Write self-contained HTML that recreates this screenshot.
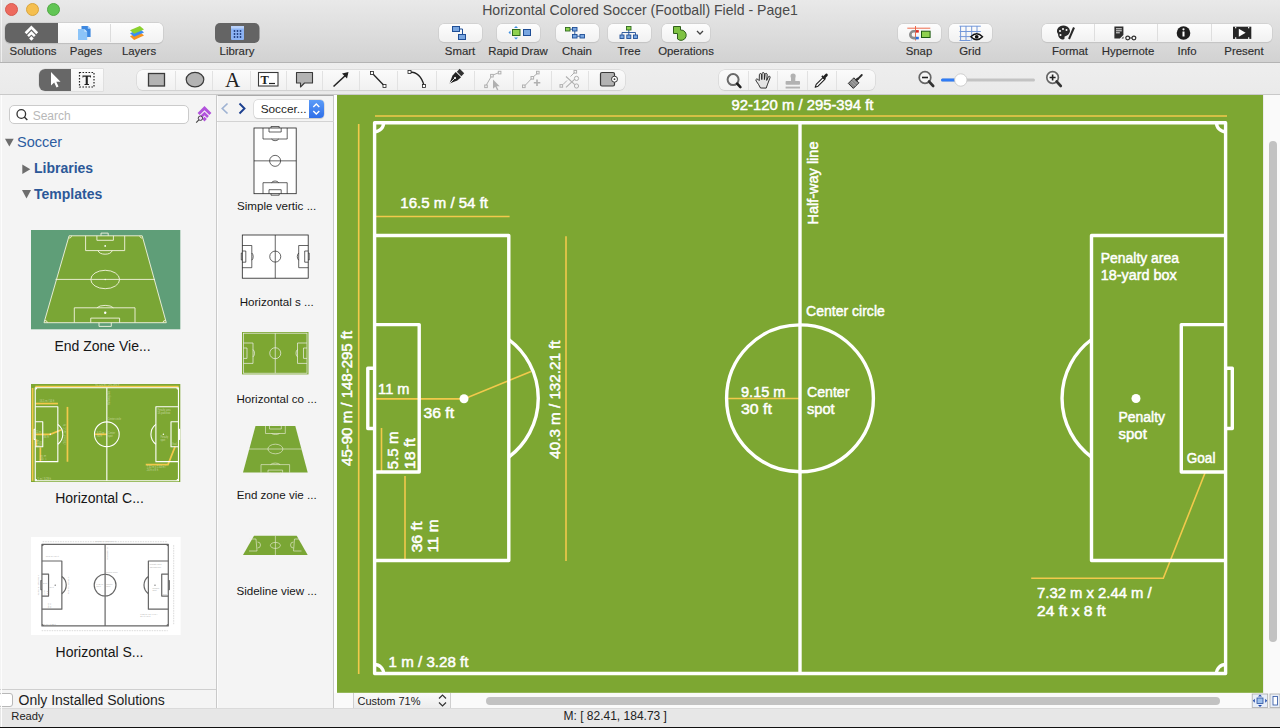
<!DOCTYPE html>
<html><head><meta charset="utf-8">
<style>
*{margin:0;padding:0;box-sizing:border-box}
html,body{width:1280px;height:728px;overflow:hidden;background:#f5f5f5}
body{position:relative;font-family:"Liberation Sans",sans-serif;color:#333}
.a{position:absolute}
#tb{left:0;top:0;width:1280px;height:63px;background:linear-gradient(#e9e9e9,#d2d2d2);border-bottom:1px solid #b4b4b4}
#title{left:0;top:1.5px;width:1280px;text-align:center;font-size:14.1px;color:#4a4a4a}
.tl{width:13px;height:13px;border-radius:50%;top:3px}
.lbl{font-size:11.4px;color:#2e2e2e;text-align:center;top:45.3px;-webkit-text-stroke:0.15px #2e2e2e}
.btn{background:linear-gradient(#fdfdfd,#f1f1f1);border-radius:5px;box-shadow:0 0 0 0.5px #c8c8c8,0 0.5px 1px rgba(0,0,0,.12);height:18.8px;top:23.5px}
#tb2{left:0;top:63px;width:1280px;height:32px;background:linear-gradient(#eeeeee,#eaeaea);border-bottom:1px solid #c9c9c9}
.grp{background:linear-gradient(#fbfbfb,#f1f1f1);border-radius:6px;box-shadow:0 0 0 0.5px #d0d0d0,0 0.5px 1px rgba(0,0,0,.1);top:69.6px;height:20.8px}
#left{left:0;top:95px;width:217px;height:613px;background:#f4f4f4;border-right:1px solid #c9c9c9}
#lib{left:217px;top:95px;width:117px;height:613px;background:#f4f4f4;border-right:1px solid #c9c9c9;border-left:1px solid #fcfcfc;border-top:1px solid #a9a9a9}
#canvas{left:334px;top:95px;width:946px;height:613px;background:#fafafa}
#fld *{vector-effect:non-scaling-stroke}
.sm{font-size:14px;color:#161616;text-align:center}
.lt{font-size:11.6px;color:#161616;text-align:center;margin-left:1.2px}
#status{left:0;top:708px;width:1280px;height:19px;background:#e7e7e7;border-top:1px solid #dadada}
</style></head><body>
<div id="tb" class="a"></div>
<div id="title" class="a">Horizontal Colored Soccer (Football) Field - Page1</div>
<div class="a tl" style="left:5.3px;background:#ed6a5e;border:0.5px solid #d65a4f"></div>
<div class="a tl" style="left:25.9px;background:#f5bf4f;border:0.5px solid #d9a53d"></div>
<div class="a tl" style="left:46.6px;background:#61c554;border:0.5px solid #52a945"></div>


<!-- toolbar top -->
<div class="a" style="left:5px;top:23px;width:158px;height:19.5px;border-radius:5px;background:linear-gradient(#fdfdfd,#f2f2f2);box-shadow:0 0 0 0.5px #c4c4c4,0 0.5px 1px rgba(0,0,0,.15);overflow:hidden">
 <div class="a" style="left:0;top:0;width:53px;height:19.5px;background:#646464"></div>
 <div class="a" style="left:105px;top:1px;width:1px;height:17.5px;background:#dcdcdc"></div>
</div>
<svg class="a" style="left:0;top:0" width="1280" height="62">
 <!-- solutions icon -->
 <g fill="none" stroke="#fff" stroke-linejoin="miter"><path d="M25.6,33.2 L31.4,27.4 L37.2,33.2" stroke-width="2.7"/><path d="M28,36.2 L31.4,32.8 L34.8,36.2" stroke-width="2.5"/></g>
 <path d="M31.4,36.1 l2.3,2.3 l-2.3,2.3 l-2.3,-2.3 z" fill="#fff"/>
 <!-- pages icon -->
 <path d="M81.5,26 h6.3 l2.8,2.8 v8.2 h-9.1 z" fill="#3d88e0"/><path d="M87.8,26 v2.8 h2.8" fill="#a9d2fb"/>
 <path d="M78,28.9 h6.4 l2.8,2.8 v8.4 h-9.2 z" fill="#8cc4f8"/><path d="M84.4,28.9 v2.8 h2.8z" fill="#c8e4fd"/>
 <!-- layers icon -->
 <path d="M130,36.3 L139.9,32 L144,35.5 L134.1,39.9 z" fill="#f6921e"/>
 <path d="M130,33.3 L139.9,29 L144,32.5 L134.1,36.8 z" fill="#3b8cf5"/>
 <path d="M130,30.3 L139.9,26 L144,29.5 L134.1,33.7 z" fill="#8bd12e"/>
 <!-- library -->
 <rect x="215" y="23" width="44.5" height="20" rx="5" fill="#646464"/>
 <rect x="231" y="26" width="13" height="14" rx="1" fill="#8db4f5"/><rect x="231" y="26" width="13" height="2.5" fill="#b9d1fa"/>
 <g fill="#1e3a7a"><circle cx="234.5" cy="31" r="0.9"/><circle cx="237.5" cy="31" r="0.9"/><circle cx="240.5" cy="31" r="0.9"/><circle cx="234.5" cy="34" r="0.9"/><circle cx="237.5" cy="34" r="0.9"/><circle cx="240.5" cy="34" r="0.9"/><circle cx="234.5" cy="37" r="0.9"/><circle cx="237.5" cy="37" r="0.9"/><circle cx="240.5" cy="37" r="0.9"/></g>
</svg>
<div class="a lbl" style="left:5px;width:56px">Solutions</div>
<div class="a lbl" style="left:58px;width:56px">Pages</div>
<div class="a lbl" style="left:111px;width:56px">Layers</div>
<div class="a lbl" style="left:209px;width:56px">Library</div>

<div class="a btn" style="left:439px;width:43px"></div>
<div class="a btn" style="left:497px;width:43px"></div>
<div class="a btn" style="left:555.5px;width:43px"></div>
<div class="a btn" style="left:607.5px;width:43px"></div>
<div class="a btn" style="left:662px;width:48px"></div>
<div class="a btn" style="left:897.5px;width:43px"></div>
<div class="a btn" style="left:949px;width:43px"></div>
<div class="a btn" style="left:1042px;width:230px"></div>
<div class="a" style="left:1094px;top:24px;width:1px;height:17px;background:#dedede"></div>
<div class="a" style="left:1157px;top:24px;width:1px;height:17px;background:#dedede"></div>
<div class="a" style="left:1210.5px;top:24px;width:1px;height:17px;background:#dedede"></div>
<svg class="a" style="left:0;top:0" width="1280" height="62">
 <!-- smart -->
 <rect x="452.5" y="26.5" width="7" height="5" fill="#79a6e0" stroke="#1f4e96" stroke-width="1"/>
 <rect x="458.5" y="34.5" width="7" height="5" fill="#79a6e0" stroke="#1f4e96" stroke-width="1"/>
 <path d="M459.5,29 h3 v5" fill="none" stroke="#1f4e96" stroke-width="1"/>
 <!-- rapid draw -->
 <rect x="512.5" y="29.5" width="7.5" height="6" fill="#8fd14f" stroke="#2f6b1f" stroke-width="1"/>
 <rect x="523.5" y="29.5" width="7" height="6" fill="#79a6e0" stroke="#1f4e96" stroke-width="1"/>
 <g fill="#3f8fe0"><path d="M516,26 l2,2 h-4z"/><path d="M516,39.5 l2,-2 h-4z"/><path d="M508.5,32.5 l2,-2 v4z"/></g>
 <!-- chain -->
 <rect x="565.5" y="27.5" width="4.5" height="3.5" fill="#8fd14f" stroke="#2f6b1f" stroke-width="0.9"/>
 <rect x="572.5" y="27.5" width="4.5" height="3.5" fill="#79a6e0" stroke="#1f4e96" stroke-width="0.9"/>
 <rect x="572.5" y="34.5" width="4.5" height="3.5" fill="#79a6e0" stroke="#1f4e96" stroke-width="0.9"/>
 <rect x="580" y="34.5" width="4.5" height="3.5" fill="#79a6e0" stroke="#1f4e96" stroke-width="0.9"/>
 <path d="M570,29.2 h2.5 M574.8,31 v3.5 M577,36.2 h3" stroke="#1f4e96" stroke-width="0.9"/>
 <!-- tree -->
 <rect x="626.5" y="26.5" width="4.5" height="3.5" fill="#8fd14f" stroke="#2f6b1f" stroke-width="0.9"/>
 <rect x="620" y="35" width="4" height="3.5" fill="#79a6e0" stroke="#1f4e96" stroke-width="0.9"/>
 <rect x="626.8" y="35" width="4" height="3.5" fill="#79a6e0" stroke="#1f4e96" stroke-width="0.9"/>
 <rect x="633.5" y="35" width="4" height="3.5" fill="#79a6e0" stroke="#1f4e96" stroke-width="0.9"/>
 <path d="M628.8,30 v2.5 M622,35 v-2.5 h13.5 v2.5 M628.8,32.5 v2.5" fill="none" stroke="#1f4e96" stroke-width="0.9"/>
 <!-- operations -->
 <path d="M673.5,26.5 h7 v3.5 a5.2,5.2 0 1 1 -3,9 v-5.5 h-4 z" fill="#7ec242" stroke="#2f5f1a" stroke-width="1"/>
 <path d="M697,31 l3,3 l3,-3" fill="none" stroke="#444" stroke-width="1.3"/>
 <!-- snap -->
 <path d="M907.3,28.2 h23 M915.5,26 v14.5" stroke="#ee5a3a" stroke-width="0.9"/>
 <path d="M916.3,31.3 h-2.6 a3.4,3.4 0 0 0 0,6.8 h2.6" fill="none" stroke="#8c8c8c" stroke-width="2.6"/>
 <rect x="915.8" y="30.1" width="3" height="2.5" fill="#e0281e"/><rect x="915.8" y="36.8" width="3" height="2.5" fill="#2a6ee0"/>
 <rect x="921.5" y="31.2" width="8.6" height="6.3" fill="#8fd14f" stroke="#1f5a14" stroke-width="1"/>
 <!-- grid -->
 <g stroke="#7397d8" stroke-width="1"><path d="M960.6,26 v14.5 M966,26 v14.5 M971.7,26 v14.5 M977,26 v7 M959.5,26.2 h21.3 M959.5,31.5 h21.3 M959.5,36.6 h11 M959.5,40.5 h11"/></g>
 <path d="M970.9,36.8 q5.8,-6 11.6,0 q-5.8,6 -11.6,0z" fill="#fff" stroke="#111" stroke-width="1.4"/><circle cx="976.7" cy="36.8" r="1.9" fill="#111"/>
 <!-- format -->
 <path d="M1058,34 a6.5,5.5 0 1 1 8,2 q-2,0 -1.5,1.5 q0.5,2 -2.5,2 a6,6 0 0 1 -4,-5.5z" fill="#2a2a2a"/>
 <g fill="#fff"><circle cx="1060" cy="31" r="1"/><circle cx="1063" cy="29" r="1"/><circle cx="1066.5" cy="30" r="1"/><circle cx="1060.5" cy="35" r="1"/></g>
 <path d="M1069,39 l5,-11.5" stroke="#2a2a2a" stroke-width="2"/>
 <!-- hypernote -->
 <path d="M1114.4,26.4 h9 v8.5 l-3.5,3.5 h-5.5 z" fill="#2e2e2e"/><path d="M1116,28.8 h5.8 M1116,30.8 h5.8 M1116,32.8 h3.8" stroke="#fff" stroke-width="0.9"/>
 <path d="M1121.5,38.4 l2,-2 v2z" fill="#2e2e2e"/>
 <circle cx="1127.7" cy="38" r="1.9" fill="none" stroke="#2e2e2e" stroke-width="1.2"/><circle cx="1133.9" cy="38" r="1.9" fill="none" stroke="#2e2e2e" stroke-width="1.2"/><path d="M1129.6,38 h2.4" stroke="#2e2e2e" stroke-width="1.1"/>
 <!-- info -->
 <circle cx="1183.5" cy="33" r="6.8" fill="#1e1e1e"/><rect x="1182.5" y="31.5" width="2" height="5" fill="#fff"/><circle cx="1183.5" cy="29.3" r="1.1" fill="#fff"/>
 <!-- present -->
 <rect x="1233" y="26.7" width="18.3" height="12.2" fill="#262626"/>
 <rect x="1235" y="26.7" width="1.3" height="1.6" fill="#eee"/><rect x="1235" y="37.3" width="1.3" height="1.6" fill="#eee"/>
 <rect x="1248" y="26.7" width="1.3" height="1.6" fill="#eee"/><rect x="1248" y="37.3" width="1.3" height="1.6" fill="#eee"/>
 <path d="M1238.8,28.8 l6.8,4 l-6.8,4z" fill="#fff"/>
</svg>
<div class="a lbl" style="left:430px;width:60px">Smart</div>
<div class="a lbl" style="left:478px;width:80px">Rapid Draw</div>
<div class="a lbl" style="left:547px;width:60px">Chain</div>
<div class="a lbl" style="left:599px;width:60px">Tree</div>
<div class="a lbl" style="left:646px;width:80px">Operations</div>
<div class="a lbl" style="left:889px;width:60px">Snap</div>
<div class="a lbl" style="left:940px;width:60px">Grid</div>
<div class="a lbl" style="left:1040px;width:60px">Format</div>
<div class="a lbl" style="left:1088px;width:80px">Hypernote</div>
<div class="a lbl" style="left:1157px;width:60px">Info</div>
<div class="a lbl" style="left:1214px;width:60px">Present</div>

<div id="tb2" class="a"></div>

<!-- toolbar 2 -->
<div class="a" style="left:39px;top:68.8px;width:64px;height:21.8px;border-radius:6px 0 0 6px;background:linear-gradient(#fcfcfc,#f2f2f2);box-shadow:0 0 0 0.5px #d4d4d4;overflow:hidden">
 <div class="a" style="left:0;top:0;width:31.6px;height:22px;background:#676767"></div>
</div>
<div class="a grp" style="left:137.4px;width:487.6px"></div>
<div class="a grp" style="left:718.8px;width:156.5px"></div>
<div class="a" style="left:0;top:0;width:1280px;height:95px;pointer-events:none">
<div class="a" style="left:175px;top:70.5px;width:1px;height:19px;background:#e2e2e2"></div><div class="a" style="left:212.3px;top:70.5px;width:1px;height:19px;background:#e2e2e2"></div><div class="a" style="left:250.3px;top:70.5px;width:1px;height:19px;background:#e2e2e2"></div><div class="a" style="left:286px;top:70.5px;width:1px;height:19px;background:#e2e2e2"></div><div class="a" style="left:322px;top:70.5px;width:1px;height:19px;background:#e2e2e2"></div><div class="a" style="left:359px;top:70.5px;width:1px;height:19px;background:#e2e2e2"></div><div class="a" style="left:397px;top:70.5px;width:1px;height:19px;background:#e2e2e2"></div><div class="a" style="left:436px;top:70.5px;width:1px;height:19px;background:#e2e2e2"></div><div class="a" style="left:474px;top:70.5px;width:1px;height:19px;background:#e2e2e2"></div><div class="a" style="left:512.5px;top:70.5px;width:1px;height:19px;background:#e2e2e2"></div><div class="a" style="left:550.6px;top:70.5px;width:1px;height:19px;background:#e2e2e2"></div><div class="a" style="left:588.4px;top:70.5px;width:1px;height:19px;background:#e2e2e2"></div><div class="a" style="left:748.4px;top:70.5px;width:1px;height:19px;background:#e2e2e2"></div><div class="a" style="left:777.3px;top:70.5px;width:1px;height:19px;background:#e2e2e2"></div><div class="a" style="left:806.7px;top:70.5px;width:1px;height:19px;background:#e2e2e2"></div><div class="a" style="left:835.6px;top:70.5px;width:1px;height:19px;background:#e2e2e2"></div>
</div>
<svg class="a" style="left:0;top:0" width="1280" height="95">
 <!-- select arrow -->
 <path d="M51,72 v13.5 l3.2,-3 l2.3,5 l2,-1 l-2.2,-4.8 h4.2 z" fill="#fff"/>
 <!-- text tool -->
 <rect x="79.5" y="72.5" width="14.5" height="14.5" fill="none" stroke="#222" stroke-width="1.2" stroke-dasharray="1.6,1.4"/>
 <path d="M82.5,75.5 h8.5 v2 h-0.8 v-0.8 h-2.4 v7.3 h1.2 v0.9 h-4.5 v-0.9 h1.2 v-7.3 h-2.4 v0.8 h-0.8 z" fill="#222"/>
 <!-- rect -->
 <rect x="148.5" y="73.5" width="16" height="12.5" fill="#b3b3b3" stroke="#3a3a3a" stroke-width="1.3"/>
 <!-- ellipse -->
 <ellipse cx="195" cy="79.6" rx="8.8" ry="7.2" fill="#b3b3b3" stroke="#3a3a3a" stroke-width="1.2"/>
 <text x="232.5" y="87" font-family="Liberation Serif" font-size="21" fill="#222" text-anchor="middle">A</text>
 <!-- text box -->
 <rect x="258.5" y="72.5" width="19.5" height="13.5" fill="#fff" stroke="#3a3a3a" stroke-width="1.1"/>
 <text x="260.5" y="84.3" font-family="Liberation Serif" font-weight="bold" font-size="12.5" fill="#222">T</text>
 <path d="M269,83.5 h6" stroke="#222" stroke-width="1.2"/>
 <!-- callout -->
 <path d="M296.5,72.5 h16 v10.5 h-8 l-4,4 v-4 h-4 z" fill="#b3b3b3" stroke="#3a3a3a" stroke-width="1.1" stroke-linejoin="round"/>
 <!-- arrow -->
 <path d="M333.5,86.5 l13.5,-12.5" stroke="#222" stroke-width="1.6"/><path d="M348.5,72 l-6.5,1.5 l5,5 z" fill="#222"/>
 <!-- line -->
 <path d="M372.5,73.5 l11.5,12" stroke="#222" stroke-width="1.3"/><rect x="370.5" y="71.5" width="3" height="3" fill="#fff" stroke="#222" stroke-width="0.8"/><rect x="383" y="84.5" width="3" height="3" fill="#fff" stroke="#222" stroke-width="0.8"/>
 <!-- curve -->
 <path d="M409.5,72 q11,0 14.5,13.5" fill="none" stroke="#222" stroke-width="1.3"/><rect x="408" y="70.5" width="3" height="3" fill="#fff" stroke="#222" stroke-width="0.8"/><rect x="422.5" y="84.5" width="3" height="3" fill="#fff" stroke="#222" stroke-width="0.8"/>
 <!-- pen -->
 <g transform="translate(454.5,78.5) rotate(45)">
  <rect x="-3.2" y="-10.5" width="6.4" height="4" fill="#333"/>
  <path d="M-3.8,-5.5 h7.6 l-0.3,5 l-3.5,7.5 l-3.5,-7.5 z" fill="#222"/>
  <path d="M0,-0.5 v7" stroke="#fff" stroke-width="0.8"/><circle cx="0" cy="-0.8" r="1" fill="#fff"/>
 </g>
 <!-- disabled tools -->
 <g stroke="#b0b0b0" fill="none" stroke-width="1">
  <path d="M486.2,85.2 l5,-8.5 M493,75 l5.5,-2.2"/><rect x="484.7" y="85" width="2.6" height="2.6"/><rect x="490.6" y="74.4" width="2.6" height="2.6"/><rect x="498.3" y="71.3" width="2.6" height="2.6"/>
  <path d="M525,85.5 l6.5,-6.8 M533.5,76.6 l4.2,-3.5"/><rect x="522.5" y="85" width="2.6" height="2.6"/><rect x="531" y="76.5" width="2.6" height="2.6"/><rect x="536.5" y="71.3" width="2.6" height="2.6"/>
  <path d="M563,84.5 l4,-4 M570.5,76.5 l4,-4"/><rect x="560" y="84.6" width="2.6" height="2.6"/><rect x="574" y="70.5" width="2.6" height="2.6"/>
  <path d="M566,76.5 l8.8,8.2 M566,87.4 l8.8,-8.2" stroke-width="1.1"/><circle cx="576.5" cy="78.4" r="2.1"/><circle cx="576.5" cy="86" r="2.1"/>
 </g>
 <path d="M493,79.5 v9.3 l2.3,-2.1 l1.8,3.6 l1.3,-0.6 l-1.8,-3.5 h3.1 z" fill="#b0b0b0"/>
 <path d="M537,79.5 v6.5 M533.8,82.75 h6.5" stroke="#b0b0b0" stroke-width="1.6"/>
 <!-- last tool -->
 <rect x="600.5" y="72.5" width="14" height="13.5" rx="1.5" fill="#b3b3b3" stroke="#3a3a3a" stroke-width="1.2"/>
 <circle cx="614.5" cy="79.2" r="3" fill="#fff" stroke="#3a3a3a" stroke-width="1"/><circle cx="614.5" cy="79.2" r="0.9" fill="#3a3a3a"/>
 <!-- zoom tool -->
 <circle cx="733.1" cy="79.6" r="5.5" fill="none" stroke="#6a6a6a" stroke-width="2"/><path d="M737.2,83.7 l3.2,3.4" stroke="#1e1e1e" stroke-width="2.6" stroke-linecap="round"/>
 <!-- hand -->
 <path d="M760.5,88 q-2,-4 -4.2,-6.8 q-1.2,-1.8 0.3,-2.2 q1.2,-0.3 2.6,1.6 l0.2,-6 q0.3,-1.3 1.3,-1 q0.9,0.3 0.9,1.5 l0.2,4.5 l0.3,-6 q0.3,-1.3 1.3,-1.1 q1,0.2 1,1.6 v5.5 l0.7,-5.3 q0.4,-1.2 1.3,-0.9 q0.9,0.3 0.8,1.5 l-0.5,5.5 l1.6,-3.6 q0.6,-1 1.4,-0.5 q0.8,0.5 0.3,1.6 l-2.4,6.2 l-1.4,4 z" fill="#e4e4e4" stroke="#1e1e1e" stroke-width="0.9" stroke-linejoin="round"/>
 <!-- stamp -->
 <circle cx="793.1" cy="76" r="2.6" fill="#b2b2b2"/><rect x="791" y="77.5" width="4.3" height="4" fill="#b2b2b2"/><rect x="785.6" y="81" width="14.4" height="3.8" rx="0.8" fill="#b2b2b2"/><rect x="785.6" y="86.6" width="14.4" height="1.9" fill="#b2b2b2"/>
 <!-- dropper -->
 <path d="M815.2,87.2 l1,-2.8 l6.8,-6.8 l1.8,1.8 l-6.8,6.8 z" fill="#fff" stroke="#1e1e1e" stroke-width="1.1" stroke-linejoin="round"/>
 <path d="M821.3,76.6 l3.3,3.3 l1.3,-1.3 l-3.3,-3.3z" fill="#1e1e1e"/><path d="M823.3,76.3 l2.5,-2.5 q1.3,-0.6 1.9,0.6 q0.4,0.9 -0.3,1.6 l-2.4,2.4z" fill="#1e1e1e"/>
 <!-- brush -->
 <path d="M848.3,83.4 l5.6,-5.6 l5,5 l-5.6,5.6 z" fill="#8a8a8a" stroke="#2a2a2a" stroke-width="1"/><path d="M850.8,81 l5,5 M852.6,79.2 l5,5" stroke="#bdbdbd" stroke-width="0.6"/>
 <path d="M855,79.8 l1.6,1.6 l2.4,-2.4 l-1.6,-1.6z" fill="#2a2a2a"/><path d="M857.5,79.3 l4.3,-4.3" stroke="#2a2a2a" stroke-width="1.8" stroke-linecap="round"/>
 <!-- zoom slider -->
 <circle cx="925" cy="77.5" r="5.8" fill="#f6f6f6" stroke="#666" stroke-width="1.7"/><path d="M922,77.5 h6" stroke="#222" stroke-width="1.6"/><path d="M929,81.5 l4.2,4.5" stroke="#333" stroke-width="2.6" stroke-linecap="round"/>
 <rect x="941" y="78.5" width="94" height="3" rx="1.5" fill="#c3c3c3"/>
 <rect x="941" y="78.5" width="20" height="3" rx="1.5" fill="#2f7cf6"/>
 <circle cx="960.8" cy="80" r="6.2" fill="#fff" stroke="#c4c4c4" stroke-width="0.8"/>
 <circle cx="1052.6" cy="77.5" r="5.8" fill="#f6f6f6" stroke="#666" stroke-width="1.7"/><path d="M1049.6,77.5 h6 M1052.6,74.5 v6" stroke="#222" stroke-width="1.6"/><path d="M1056.6,81.5 l4.2,4.5" stroke="#333" stroke-width="2.6" stroke-linecap="round"/>
</svg>

<div id="left" class="a"></div>
<div id="lib" class="a"></div>

<!-- left panel content -->
<div class="a" style="left:9.3px;top:105px;width:179.7px;height:19px;background:#fff;border:1px solid #cbcbcb;border-radius:5px"></div>
<div class="a" style="left:32.7px;top:108.6px;font-size:12px;color:#b8b8b8">Search</div>
<svg class="a" style="left:0;top:95px" width="216" height="40">
 <circle cx="21.3" cy="19" r="4.3" fill="none" stroke="#333" stroke-width="1.3"/><path d="M24.3,22 l3,3" stroke="#333" stroke-width="1.4"/>
 <g fill="none" stroke="#b252dc"><path d="M198.6,19 L204.5,13.1 L210.4,19" stroke-width="2.9"/><path d="M201,22 L204.5,18.5 L208,22" stroke-width="2.6"/></g><path d="M204.5,21.8 l2.3,2.3 l-2.3,2.3 l-2.3,-2.3 z" fill="#b252dc"/>
 <circle cx="200.4" cy="23.2" r="2.2" fill="#f0d8fa" stroke="#444" stroke-width="1"/><path d="M198.8,24.9 l-2.6,2.8" stroke="#444" stroke-width="1.1"/>
</svg>
<svg class="a" style="left:0;top:130px" width="40" height="80">
 <path d="M5,8.8 h8.7 l-4.35,7.8 z" fill="#6d6d6d"/>
 <path d="M22.3,34.5 v9.5 l8,-4.75 z" fill="#6d6d6d"/>
 <path d="M22,60 h9 l-4.5,8.5 z" fill="#6d6d6d"/>
</svg>
<div class="a" style="left:17px;top:133.5px;font-size:14.5px;color:#2d5c9f">Soccer</div>
<div class="a" style="left:34px;top:160px;font-size:14px;font-weight:bold;color:#2c5898">Libraries</div>
<div class="a" style="left:34px;top:185.6px;font-size:14px;font-weight:bold;color:#2c5898">Templates</div>

<!-- thumb 1: end zone -->
<svg class="a" style="left:31.3px;top:230.3px" width="149.3" height="99.3">
 <rect width="149.3" height="99.3" fill="#5f9e78"/>
 <g fill="none" stroke="#f4f4e0" stroke-width="0.9">
 <path d="M38.1,5.8 h73.1 l24.1,86.9 h-122.3 z" fill="#7aa635"/>
 <path d="M24.5,49.4 h99.5"/>
 <ellipse cx="74.2" cy="49.5" rx="14.4" ry="9.2"/>
 <path d="M54.6,5.8 v14.8 h39.1 v-14.8 M65.9,5.8 v4.5 h16.5 v-4.5 M70,5.8 v-2.7 h7.2 v2.7"/>
 <path d="M66.9,20.6 a7.5,5 0 0 0 14.4,0"/>
 <path d="M43.3,92.7 v-14.9 h60.7 v14.9 M59.75,92.7 v-4.6 h28.85 v4.6 M68,92.7 v3.7 h12.3 v-3.7"/>
 <path d="M65.9,77.8 a9,4 0 0 1 16.5,0"/>
 <path d="M38.1,8 a2,2 0 0 0 2.3,-2.2 M111.2,8 a2,2 0 0 1 -2.3,-2.2 M13.6,90.5 a2.5,2.5 0 0 1 2.8,2.2 M134.7,90.5 a2.5,2.5 0 0 0 -2.8,2.2"/>
 </g>
 <g fill="#fff"><circle cx="74.2" cy="15.9" r="0.9"/><circle cx="74.2" cy="82.8" r="1.2"/><circle cx="74.2" cy="49.5" r="0.7"/></g>
</svg>
<div class="a sm" style="left:0;top:337.5px;width:205px">End Zone Vie...</div>

<!-- thumb 2: horizontal colored -->
<svg class="a" style="left:31.3px;top:383.6px" width="149.3" height="98.9" viewBox="31.3 383.6 149.3 98.9" style="--ws:1px;--ys:1.6px;--ts:0px;--tx:rgba(255,255,255,0.6)">
 <rect x="31.3" y="383.6" width="149.3" height="98.9" fill="#7da732"/>
 <use href="#fld" transform="translate(-27.5,366.6) scale(0.1683,0.1689)" style="--ws:1.1px;--ys:1.7px;--ts:0px;--tx:rgba(255,255,240,0.55)"/>
</svg>
<div class="a sm" style="left:-3px;top:490px;width:205px">Horizontal C...</div>

<!-- thumb 3: horizontal simple -->
<svg class="a" style="left:31.3px;top:536.8px" width="149.6" height="98.7" viewBox="31.3 536.8 149.6 98.7">
 <rect x="31.3" y="536.8" width="149.6" height="98.7" fill="#fff"/>
 <use href="#fld" transform="translate(-13.4,525.9) scale(0.1485,0.1482)" style="--wl:#666;--yl:transparent;--ws:1.2px;--ys:0px;--ts:0px;--tx:#aaa"/>
 <path d="M43,541.5 h125 M174,545 v80 M42,630.5 h126" stroke="#cfcfcf" stroke-width="0.8" stroke-dasharray="1.5,1"/>
</svg>
<div class="a sm" style="left:-3px;top:644px;width:205px">Horizontal S...</div>

<div class="a" style="left:0;top:688.5px;width:216px;height:1px;background:#cfcfcf"></div>
<div class="a" style="left:-2px;top:692.6px;width:15px;height:14px;background:#fff;border:1px solid #b8b8b8;border-radius:3px"></div>
<div class="a" style="left:18.5px;top:691.5px;font-size:14px;color:#1e1e1e">Only Installed Solutions</div>

<div id="canvas" class="a"></div>
<div id="status" class="a"></div>

<!-- library panel -->
<div class="a" style="left:217px;top:121px;width:117px;height:1px;background:#d3d3d3"></div>
<svg class="a" style="left:217px;top:95px" width="117" height="27">
 <path d="M10.5,8.5 l-5.2,5 l5.2,5" fill="none" stroke="#9fb3d3" stroke-width="1.7"/>
 <path d="M22.5,8.5 l5,5 l-5,5" fill="none" stroke="#1b3f8f" stroke-width="1.9"/>
</svg>
<div class="a" style="left:253.6px;top:100px;width:70.4px;height:17.5px;background:#fff;border-radius:4px;box-shadow:0 0 0 0.5px #c9c9c9,0 0.5px 1px rgba(0,0,0,.15);overflow:hidden">
 <div class="a" style="left:55.8px;top:0;width:14.6px;height:17.5px;background:linear-gradient(#5b9cf8,#2f6fe8)"></div>
</div>
<div class="a" style="left:260.7px;top:101.8px;font-size:11.8px;color:#1e1e1e">Soccer...</div>
<svg class="a" style="left:309px;top:100px" width="15" height="18">
 <path d="M4.3,7 l3,-3 l3,3 M4.3,11 l3,3 l3,-3" fill="none" stroke="#fff" stroke-width="1.4"/>
</svg>
<!-- lib thumbs -->
<svg class="a" style="left:217px;top:122px" width="117" height="480">
 <g fill="#fff" stroke="#222" stroke-width="0.8">
  <rect x="37" y="6" width="42.2" height="65.7"/>
 </g>
 <g fill="none" stroke="#222" stroke-width="0.7">
  <path d="M37,38.85 h42.2"/><circle cx="58.1" cy="38.85" r="5.5"/>
  <path d="M46,6 v11 h24.2 v-11 M52,6 v4 h12.2 v-4 M54,6 v-1.5 h8.2 v1.5 M54.5,17 a4,3 0 0 0 7.2,0"/>
  <path d="M46,71.7 v-11 h24.2 v11 M52,71.7 v-4 h12.2 v4 M54,71.7 v1.5 h8.2 v-1.5 M54.5,60.7 a4,3 0 0 1 7.2,0"/>
 </g>
 <!-- horizontal simple -->
 <g fill="#fff" stroke="#222" stroke-width="0.8"><rect x="25.3" y="113" width="65.9" height="43.2"/></g>
 <g fill="none" stroke="#222" stroke-width="0.7">
  <path d="M58.25,113 v43.2"/><circle cx="58.25" cy="134.6" r="5.5"/>
  <path d="M25.3,123.5 h9.5 v22.2 h-9.5 M25.3,129 h3.5 v11.2 h-3.5 M34.8,131 a3.5,4.5 0 0 1 0,7.2"/>
  <path d="M91.2,123.5 h-9.5 v22.2 h9.5 M91.2,129 h-3.5 v11.2 h3.5 M81.7,131 a3.5,4.5 0 0 0 0,7.2"/>
  <path d="M25.3,131 h-1 v7 h1 M91.2,131 h1 v7 h-1"/>
 </g>
 <!-- horizontal colored -->
 <rect x="25" y="210" width="66.5" height="42.4" fill="#7da732"/>
 <g fill="none" stroke="#f0f0f0" stroke-width="0.7">
  <rect x="26.5" y="211.2" width="63.5" height="40"/>
  <path d="M58.25,211.2 v40"/><circle cx="58.25" cy="231.2" r="5.5"/>
  <path d="M26.5,221 h9.5 v20.4 h-9.5 M26.5,226 h3.5 v10.4 h-3.5 M36,227.5 a3.5,4.5 0 0 1 0,7.4"/>
  <path d="M90,221 h-9.5 v20.4 h9.5 M90,226 h-3.5 v10.4 h3.5 M80.5,227.5 a3.5,4.5 0 0 0 0,7.4"/>
 </g>
 <!-- end zone -->
 <path d="M38.5,304 h39.8 l12.4,46.6 h-64.7 z" fill="#7aa635"/>
 <g fill="none" stroke="#f0f0e0" stroke-width="0.6">
  <path d="M32,327 h52.7"/><ellipse cx="58.4" cy="327" rx="7.5" ry="4.8"/>
  <path d="M48.5,304 v7.5 h19.8 v-7.5 M52.5,304 v3 h11.8 v-3 M54.5,304 v-1.5 h7.8 v1.5 M54.5,311.5 a5,2.5 0 0 0 8,0"/>
  <path d="M44,350.6 v-8 h28.6 v8 M51,350.6 v-2.5 h14.6 v2.5 M53,350.6 v1.5 h10.6 v-1.5 M53.5,342.6 a5.5,3 0 0 1 9.6,0"/>
 </g>
 <!-- sideline -->
 <path d="M37,413.8 h42.7 l11,19.2 h-64.7 z" fill="#7aa635"/>
 <g fill="none" stroke="#f0f0e0" stroke-width="0.6">
  <path d="M58.4,413.8 v19.2"/><ellipse cx="58.4" cy="423.4" rx="5" ry="3"/>
  <path d="M34,417 h5 l1,12 h-8 M34,417 l-1.5,0 M40.5,420 a3,3 0 0 1 0,6"/>
  <path d="M82.5,417 h-5 l-1,12 h8 M76.5,420 a3,3 0 0 0 0,6"/>
 </g>
</svg>
<div class="a lt" style="left:217px;top:198.5px;width:117px">Simple vertic ...</div>
<div class="a lt" style="left:217px;top:294.7px;width:117px">Horizontal s ...</div>
<div class="a lt" style="left:217px;top:391.7px;width:117px">Horizontal co ...</div>
<div class="a lt" style="left:217px;top:487.5px;width:117px">End zone vie ...</div>
<div class="a lt" style="left:217px;top:583.6px;width:117px">Sideline view ...</div>

<!-- canvas chrome -->
<div class="a" style="left:334px;top:95px;width:2.8px;height:598px;background:#fff"></div>
<div class="a" style="left:1263px;top:95px;width:17px;height:598px;background:#fafafa;border-left:1px solid #ececec"></div>
<div class="a" style="left:1268.8px;top:140.8px;width:8px;height:501px;border-radius:4px;background:#c2c2c2"></div>
<div class="a" style="left:334px;top:692.8px;width:946px;height:15.2px;background:#fafafa"></div>
<div class="a" style="left:353px;top:692.8px;width:98.4px;height:15px;background:linear-gradient(#fafafa,#ececec);border-left:1px solid #cfcfcf;border-right:1px solid #cfcfcf"></div>
<div class="a" style="left:357.5px;top:695.3px;font-size:11px;color:#222">Custom 71%</div>
<svg class="a" style="left:436px;top:693px" width="14" height="15">
 <path d="M3,5.5 l3.5,-3.5 l3.5,3.5 M3,9.5 l3.5,3.5 l3.5,-3.5" fill="none" stroke="#333" stroke-width="1.2"/>
</svg>
<div class="a" style="left:486px;top:696.8px;width:733.5px;height:8px;border-radius:4px;background:#c2c2c2"></div>
<svg class="a" style="left:1250px;top:693px" width="30" height="15">
 <rect x="2.2" y="1" width="15.5" height="13.5" fill="#e8eef8" stroke="#aaa" stroke-width="0.8"/>
 <rect x="7" y="5" width="6" height="5.5" fill="#9ec0ec" stroke="#2a50a0" stroke-width="0.8"/>
 <g fill="#1f49a8"><path d="M10,1.5 l2,2 h-4z M10,14 l2,-2 h-4z M2.8,7.7 l2,-2 v4z M17.2,7.7 l-2,-2 v4z"/></g>
 <rect x="20" y="1" width="10" height="13.5" fill="#e8eef8" stroke="#aaa" stroke-width="0.8"/>
 <rect x="23" y="3.5" width="4.5" height="8.5" fill="#fff" stroke="#2a50a0" stroke-width="0.8"/>
</svg>

<svg class="a" style="left:0;top:0" width="1280" height="728" viewBox="0 0 1280 728">
<rect x="337" y="95" width="926" height="597.8" fill="#7da732"/>
<g id="fld">
<g fill="none" style="stroke:var(--yl,#f2c94c);stroke-width:var(--ys,1.6px)">
<line x1="375" y1="116" x2="1227" y2="116"/>
<line x1="358.7" y1="124" x2="358.7" y2="674"/>
<line x1="376" y1="216.5" x2="509.6" y2="216.5"/>
<line x1="566" y1="236.3" x2="566" y2="561"/>
<polyline points="376,398.9 464,398.9 531,371.5"/>
<line x1="381.5" y1="428" x2="381.5" y2="471"/>
<line x1="405" y1="476" x2="405" y2="561"/>
<line x1="727" y1="398.5" x2="800" y2="398.5"/>
<polyline points="1205.6,471.5 1163.3,578.3 1031.2,578.3"/>
</g>
<g fill="none" style="stroke:var(--wl,#fff);stroke-width:var(--ws,3.4px)" stroke-linejoin="round">
<rect x="374.6" y="122.8" width="851" height="550.7"/>
<line x1="800" y1="122.8" x2="800" y2="673.5"/>
<circle cx="800" cy="398.3" r="73.4"/>
<polyline points="374.6,235.5 508.8,235.5 508.8,560.5 374.6,560.5"/>
<polyline points="1225.5,235.5 1091.5,235.5 1091.5,560.5 1225.5,560.5"/>
<polyline points="374.6,324.6 419.2,324.6 419.2,472 374.6,472"/>
<polyline points="1225.5,324.6 1181.3,324.6 1181.3,472 1225.5,472"/>
<polyline points="374.6,368.3 367.8,368.3 367.8,428.5 374.6,428.5"/>
<polyline points="1225.5,368.3 1232.3,368.3 1232.3,428.5 1225.5,428.5"/>
<path d="M508.8,339.5 A73.4,73.4 0 0 1 508.8,457.1"/>
<path d="M1091.5,339.5 A73.4,73.4 0 0 0 1091.5,457.1"/>
<path d="M374.6,131.8 A9,9 0 0 0 383.6,122.8"/>
<path d="M1216.5,122.8 A9,9 0 0 0 1225.5,131.8"/>
<path d="M383.6,673.5 A9,9 0 0 0 374.6,664.5"/>
<path d="M1225.5,664.5 A9,9 0 0 0 1216.5,673.5"/>
</g>
<g style="fill:var(--wl,#fff)"><circle cx="464" cy="398.7" r="4.5"/><circle cx="1136" cy="398.5" r="4.5"/></g>
<g style="fill:var(--tx,#fff);stroke:var(--tx,#fff);stroke-width:var(--ts,0.5px)" font-family="Liberation Sans" font-size="15.5">
<text x="731.6" y="109.6" textLength="141.9" lengthAdjust="spacingAndGlyphs">92-120 m / 295-394 ft</text>
<text x="400.3" y="208.0" textLength="87.7" lengthAdjust="spacingAndGlyphs">16.5 m / 54 ft</text>
<text x="806.1" y="315.8" textLength="78.7" lengthAdjust="spacingAndGlyphs">Center circle</text>
<text x="741.0" y="396.9" textLength="44.5" lengthAdjust="spacingAndGlyphs">9.15 m</text>
<text x="741.0" y="413.7" textLength="30.8" lengthAdjust="spacingAndGlyphs">30 ft</text>
<text x="807.0" y="397.3" textLength="42.4" lengthAdjust="spacingAndGlyphs">Center</text>
<text x="807.0" y="413.7" textLength="27.7" lengthAdjust="spacingAndGlyphs">spot</text>
<text x="1100.8" y="262.6" textLength="78.2" lengthAdjust="spacingAndGlyphs">Penalty area</text>
<text x="1100.8" y="279.8" textLength="76.0" lengthAdjust="spacingAndGlyphs">18-yard box</text>
<text x="1118.5" y="421.6" textLength="46.5" lengthAdjust="spacingAndGlyphs">Penalty</text>
<text x="1118.5" y="438.5" textLength="28.3" lengthAdjust="spacingAndGlyphs">spot</text>
<text x="1186.8" y="462.5" textLength="28.6" lengthAdjust="spacingAndGlyphs">Goal</text>
<text x="1037.0" y="598.3" textLength="114.7" lengthAdjust="spacingAndGlyphs">7.32 m x 2.44 m /</text>
<text x="1037.0" y="615.5" textLength="68.5" lengthAdjust="spacingAndGlyphs">24 ft x 8 ft</text>
<text x="388.6" y="666.9" textLength="79.8" lengthAdjust="spacingAndGlyphs">1 m / 3.28 ft</text>
<text x="378.1" y="393.8" textLength="31.4" lengthAdjust="spacingAndGlyphs">11 m</text>
<text x="423.5" y="417.8" textLength="30.6" lengthAdjust="spacingAndGlyphs">36 ft</text>
<text transform="translate(817.8,224.6) rotate(-90)" textLength="83.1" lengthAdjust="spacingAndGlyphs">Half-way line</text>
<text transform="translate(352.3,465.9) rotate(-90)" textLength="135.1" lengthAdjust="spacingAndGlyphs">45-90 m / 148-295 ft</text>
<text transform="translate(559.5,458.7) rotate(-90)" textLength="118.2" lengthAdjust="spacingAndGlyphs">40.3 m / 132.21 ft</text>
<text transform="translate(397.8,469.2) rotate(-90)" textLength="37.7" lengthAdjust="spacingAndGlyphs">5.5 m</text>
<text transform="translate(415.0,469.2) rotate(-90)" textLength="31.1" lengthAdjust="spacingAndGlyphs">18 ft</text>
<text transform="translate(421.9,552.6) rotate(-90)" textLength="31.1" lengthAdjust="spacingAndGlyphs">36 ft</text>
<text transform="translate(438.2,552.6) rotate(-90)" textLength="33.1" lengthAdjust="spacingAndGlyphs">11 m</text>
</g>
</g>
</svg>


<div class="a" style="left:11.3px;top:709.6px;font-size:11.2px;color:#222">Ready</div>
<div class="a" style="left:0;top:727px;width:1280px;height:1px;background:#111"></div>
<div class="a" style="left:1.2px;top:95px;width:1px;height:632px;background:#fdfdfd"></div>
<div class="a" style="left:1.2px;top:0;width:1px;height:62px;background:rgba(255,255,255,.6)"></div>
<div class="a" style="left:563.5px;top:709px;font-size:12px;color:#222">M: [ 82.41, 184.73 ]</div>
</body></html>
